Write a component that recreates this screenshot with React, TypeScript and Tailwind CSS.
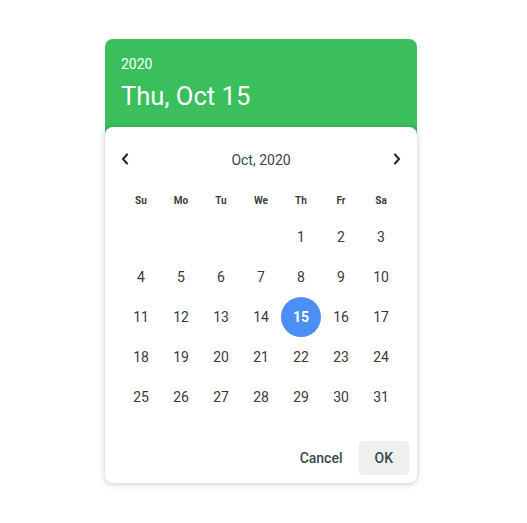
import React from 'react';

const weekDays = ['Su', 'Mo', 'Tu', 'We', 'Th', 'Fr', 'Sa'];

function buildDays() {
  const cells: (number | null)[] = [null, null, null, null];
  for (let d = 1; d <= 31; d++) cells.push(d);
  return cells;
}

export default function App() {
  const days = buildDays();
  const selected = 15;

  return (
    <div className="min-h-screen bg-white pt-[39px] pl-[105px]" style={{ fontFamily: 'Roboto, "Noto Sans", sans-serif' }}>
      <div className="w-[312px]">
        {/* Header */}
        <div className="bg-[#3bbe5c] rounded-t-lg px-4 pt-[15px] pb-[23px] text-white">
          <div className="text-sm leading-5">2020</div>
          <div className="mt-[6px] text-[25.6px] leading-8">Thu, Oct 15</div>
        </div>

        {/* Calendar */}
        <div className="-mt-2 bg-white rounded-lg shadow-[0_1px_6px_rgba(0,0,0,0.22)] relative">
          <div className="pt-[13px] px-3 h-[53px] flex items-center justify-between">
            <button className="w-4 h-10 flex items-center justify-center text-[#263238] -mt-[2px]">
              <svg width="8" height="12" viewBox="0 0 8 12" fill="none">
                <path d="M6 1.5 L2 6 L6 10.5" stroke="currentColor" strokeWidth="2.2" strokeLinecap="round" strokeLinejoin="round" />
              </svg>
            </button>
            <div className="text-sm text-[#37474f]">Oct, 2020</div>
            <button className="w-4 h-10 flex items-center justify-center text-[#263238] -mt-[2px]">
              <svg width="8" height="12" viewBox="0 0 8 12" fill="none">
                <path d="M2 1.5 L6 6 L2 10.5" stroke="currentColor" strokeWidth="2.2" strokeLinecap="round" strokeLinejoin="round" />
              </svg>
            </button>
          </div>

          <div className="px-4">
            <div className="grid grid-cols-7 mt-[3px] h-[34px] items-center">
              {weekDays.map((d) => (
                <div key={d} className="text-center text-[10px] font-bold text-[#3d3d3d]">
                  {d}
                </div>
              ))}
            </div>
            <div className="grid grid-cols-7">
              {days.map((d, i) => (
                <div key={i} className="h-10 flex items-center justify-center">
                  {d !== null &&
                    (d === selected ? (
                      <div className="w-10 h-10 rounded-full bg-[#4b8ef5] text-white text-sm font-bold flex items-center justify-center">
                        {d}
                      </div>
                    ) : (
                      <span className="text-sm text-[#3a3a3a]">{d}</span>
                    ))}
                </div>
              ))}
            </div>
          </div>

          <div className="flex justify-end mt-6 pr-2 pb-2">
            <button className="h-[34px] px-4 text-sm font-medium text-[#37474f] rounded">Cancel</button>
            <button className="h-[34px] px-4 text-sm font-medium text-[#37474f] bg-[#eeefef] rounded">OK</button>
          </div>
        </div>
      </div>
    </div>
  );
}
